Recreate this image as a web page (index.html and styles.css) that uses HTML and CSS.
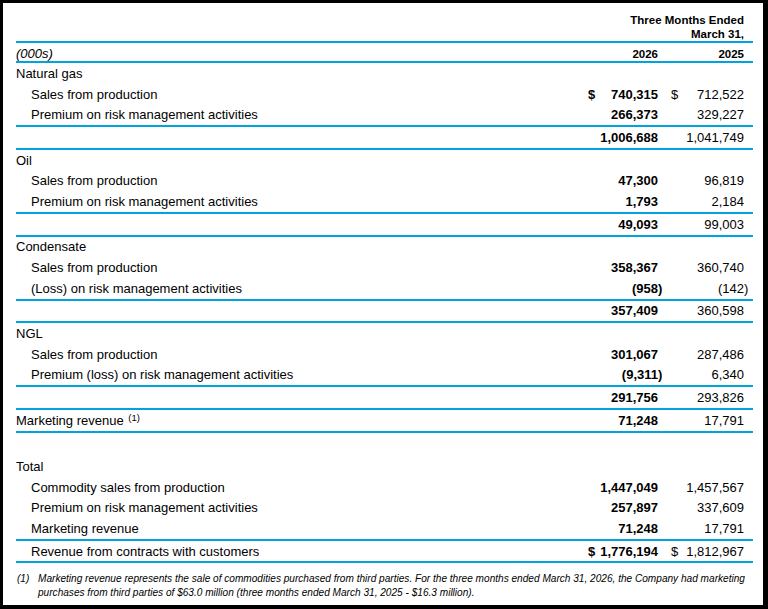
FILE: index.html
```html
<!DOCTYPE html>
<html lang="en">
<head>
    <meta charset="UTF-8">
    <meta name="viewport" content="width=device-width, initial-scale=1.0">
    <title>Revenue from Contracts with Customers</title>
    <link rel="stylesheet" href="styles.css">
</head>
<body>
    <div class="sheet">
        <div class="period">Three Months Ended<br>March 31,</div>

        <div class="row col-head rule">
            <div class="label"><em>(000s)</em></div>
            <div class="cur cy"></div><div class="num cy year">2026</div>
            <div class="cur py"></div><div class="num py year">2025</div>
        </div>

        <!-- Natural gas -->
        <div class="row">
            <div class="label">Natural gas</div>
        </div>
        <div class="row">
            <div class="label indent">Sales from production</div>
            <div class="cur cy">$</div><div class="num cy">740,315</div>
            <div class="cur py">$</div><div class="num py">712,522</div>
        </div>
        <div class="row rule">
            <div class="label indent">Premium on risk management activities</div>
            <div class="cur cy"></div><div class="num cy">266,373</div>
            <div class="cur py"></div><div class="num py">329,227</div>
        </div>
        <div class="row rule">
            <div class="label"></div>
            <div class="cur cy"></div><div class="num cy">1,006,688</div>
            <div class="cur py"></div><div class="num py">1,041,749</div>
        </div>

        <!-- Oil -->
        <div class="row">
            <div class="label">Oil</div>
        </div>
        <div class="row">
            <div class="label indent">Sales from production</div>
            <div class="cur cy"></div><div class="num cy">47,300</div>
            <div class="cur py"></div><div class="num py">96,819</div>
        </div>
        <div class="row rule">
            <div class="label indent">Premium on risk management activities</div>
            <div class="cur cy"></div><div class="num cy">1,793</div>
            <div class="cur py"></div><div class="num py">2,184</div>
        </div>
        <div class="row rule">
            <div class="label"></div>
            <div class="cur cy"></div><div class="num cy">49,093</div>
            <div class="cur py"></div><div class="num py">99,003</div>
        </div>

        <!-- Condensate -->
        <div class="row">
            <div class="label">Condensate</div>
        </div>
        <div class="row">
            <div class="label indent">Sales from production</div>
            <div class="cur cy"></div><div class="num cy">358,367</div>
            <div class="cur py"></div><div class="num py">360,740</div>
        </div>
        <div class="row rule">
            <div class="label indent">(Loss) on risk management activities</div>
            <div class="cur cy"></div><div class="num cy">(958<span class="paren">)</span></div>
            <div class="cur py"></div><div class="num py">(142<span class="paren">)</span></div>
        </div>
        <div class="row rule">
            <div class="label"></div>
            <div class="cur cy"></div><div class="num cy">357,409</div>
            <div class="cur py"></div><div class="num py">360,598</div>
        </div>

        <!-- NGL -->
        <div class="row">
            <div class="label">NGL</div>
        </div>
        <div class="row">
            <div class="label indent">Sales from production</div>
            <div class="cur cy"></div><div class="num cy">301,067</div>
            <div class="cur py"></div><div class="num py">287,486</div>
        </div>
        <div class="row rule">
            <div class="label indent">Premium (loss) on risk management activities</div>
            <div class="cur cy"></div><div class="num cy">(9,311<span class="paren">)</span></div>
            <div class="cur py"></div><div class="num py">6,340</div>
        </div>
        <div class="row rule">
            <div class="label"></div>
            <div class="cur cy"></div><div class="num cy">291,756</div>
            <div class="cur py"></div><div class="num py">293,826</div>
        </div>

        <div class="row rule">
            <div class="label">Marketing revenue <sup class="ref">(1)</sup></div>
            <div class="cur cy"></div><div class="num cy">71,248</div>
            <div class="cur py"></div><div class="num py">17,791</div>
        </div>

        <div class="spacer"></div>

        <!-- Total -->
        <div class="row">
            <div class="label">Total</div>
        </div>
        <div class="row">
            <div class="label indent">Commodity sales from production</div>
            <div class="cur cy"></div><div class="num cy">1,447,049</div>
            <div class="cur py"></div><div class="num py">1,457,567</div>
        </div>
        <div class="row">
            <div class="label indent">Premium on risk management activities</div>
            <div class="cur cy"></div><div class="num cy">257,897</div>
            <div class="cur py"></div><div class="num py">337,609</div>
        </div>
        <div class="row rule">
            <div class="label indent">Marketing revenue</div>
            <div class="cur cy"></div><div class="num cy">71,248</div>
            <div class="cur py"></div><div class="num py">17,791</div>
        </div>
        <div class="row rule">
            <div class="label indent">Revenue from contracts with customers</div>
            <div class="cur cy">$</div><div class="num cy">1,776,194</div>
            <div class="cur py">$</div><div class="num py">1,812,967</div>
        </div>

        <div class="note">
            <span class="note-mark">(1)</span>
            <span class="note-text">Marketing revenue represents the sale of commodities purchased from third parties. For the three months ended March 31, 2026, the Company had marketing purchases from third parties of $63.0 million (three months ended March 31, 2025 - $16.3 million).</span>
        </div>
    </div>
</body>
</html>
```

FILE: styles.css
```css
body {
    margin: 0;
    background-color: #000;
    font-family: "Liberation Sans", Arial, sans-serif;
    color: #000;
}
.sheet {
    box-sizing: border-box;
    width: 760px;
    height: 602px;
    margin: 3px 5px 4px 3px;
    padding: 10px 10px 0 13px;
    background-color: #fff;
}
.period {
    font-size: 11.5px;
    font-weight: bold;
    line-height: 14px;
    text-align: right;
    padding-right: 9px;
    border-bottom: 2px solid #00a3e0;
}
.row {
    display: grid;
    grid-template-columns: 1fr 11px 64px 18px 72px;
    align-items: center;
    height: 20.7px;
    font-size: 13px;
    line-height: 15px;
}
.rule {
    border-bottom: 2px solid #00a3e0;
}
.col-head {
    height: 18px;
    align-items: end;
}
.col-head .year {
    font-size: 11.5px;
    font-weight: bold;
    line-height: 13px;
}
.indent {
    padding-left: 15px;
}
.cy {
    font-weight: bold;
}
.num {
    text-align: right;
    white-space: nowrap;
}
.num.cy {
    padding-right: 5px;
}
.num.py {
    padding-right: 9px;
}
.cur.py {
    padding-left: 8px;
}
/* closing bracket hangs past the digits */
.paren {
    display: inline-block;
    width: 0;
}
.ref {
    font-size: 9.5px;
    line-height: 0;
    vertical-align: 4px;
    margin-left: 1px;
}
.spacer {
    height: 23.3px;
}
.note {
    display: flex;
    margin-top: 9px;
    font-size: 10.1px;
    line-height: 14px;
    font-style: italic;
}
.note-mark {
    flex: none;
    width: 21px;
    padding-left: 1px;
}
```
